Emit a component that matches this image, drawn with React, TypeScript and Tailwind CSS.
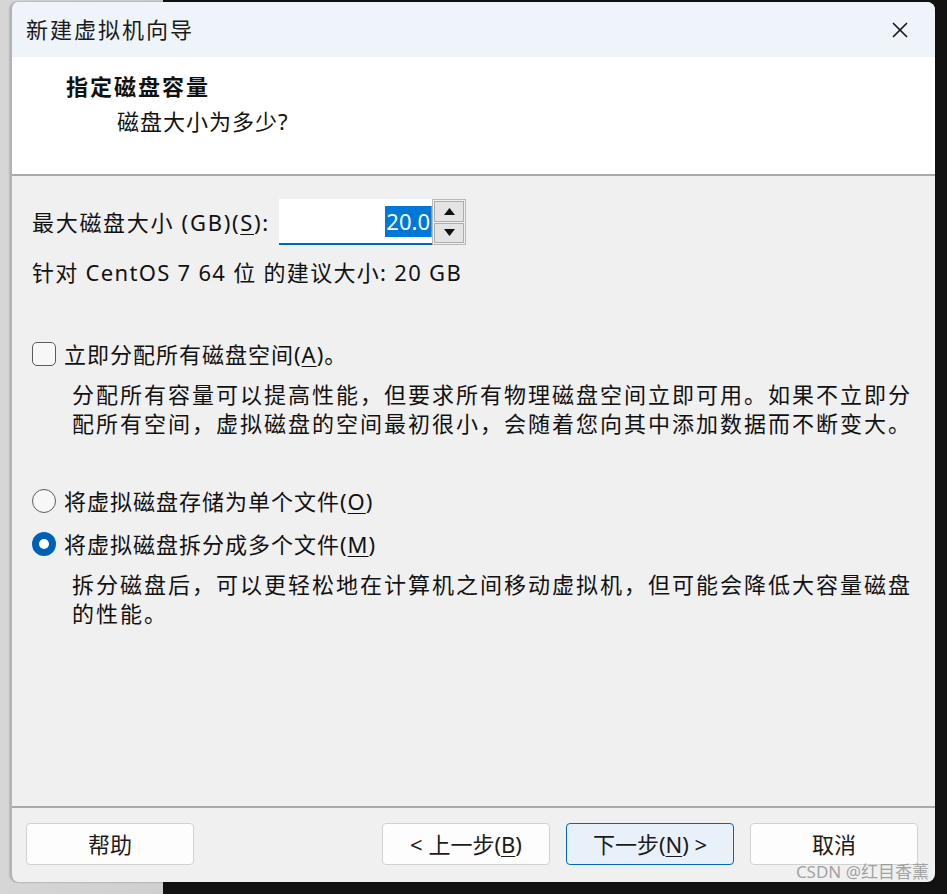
import { X } from "lucide-react";

const font = "font-['Segoe_UI','Noto_Sans','Noto_Sans_CJK_SC',sans-serif]";

function U({ c }: { c: string }) {
  return <span className="underline underline-offset-[3px] decoration-1">{c}</span>;
}

function Button({
  children,
  primary,
}: {
  children: React.ReactNode;
  primary?: boolean;
}) {
  return (
    <div
      className={`flex h-[42px] w-[168px] items-center justify-center rounded-[4px] border text-[22px] text-[#1b1b1b] ${
        primary ? "border-[#0067c0] bg-[#e8f1fa]" : "border-[#d2d2d2] bg-[#fdfdfd]"
      }`}
    >
      {children}
    </div>
  );
}

export default function App() {
  return (
    <div
      className={`h-[894px] w-[947px] overflow-hidden bg-[linear-gradient(to_right,#d6d6d6_0,#cfcfcf_163px,#121212_163px)] pl-[10px] pt-[2px] ${font}`}
    >
      <div className="flex h-[880px] w-[925px] flex-col overflow-hidden rounded-[8px] border-l-2 border-[#b3b3b3] bg-[#f0f0f0] shadow-[0_0_2px_rgba(0,0,0,0.4)]">
        {/* Title bar */}
        <div className="flex h-[55px] shrink-0 items-center justify-between bg-[#eef4f9] pl-[14px] pr-[22px]">
          <span className="text-[22px] tracking-[2px] text-[#1a1a1a]">新建虚拟机向导</span>
          <X className="h-[26px] w-[26px] text-[#1a1a1a]" strokeWidth={1.6} />
        </div>

        {/* Header */}
        <div className="h-[119px] shrink-0 border-b-2 border-[#a9a9a9] bg-white pl-[54px] pt-[14px]">
          <div className="text-[22px] font-bold leading-[30px] tracking-[2px] text-[#111]">指定磁盘容量</div>
          <div className="mt-[5px] pl-[51px] text-[22px] leading-[30px] tracking-[1px] text-[#111]">
            磁盘大小为多少?
          </div>
        </div>

        {/* Body */}
        <div className="flex flex-1 flex-col pl-[20px] pt-[23px] text-[22px] text-[#111]">
          <div className="flex h-[46px] items-center">
            <span className="w-[247px] tracking-[1.7px]">
              最大磁盘大小 (GB)(<U c="S" />):
            </span>
            <div className="flex h-[46px] w-[153px] items-center justify-end border-b-2 border-[#0067c0] bg-white">
              <span className="bg-[#0078d7] px-[1px] leading-[31px] text-white">20.0</span>
              <span className="h-[31px] w-[1px] bg-[#e07a2b]" />
            </div>
            <div className="flex h-[46px] w-[34px] flex-col gap-[1px] border border-[#b8b8b8] bg-[#f0f0f0] p-[1px]">
              <div className="flex flex-1 items-center justify-center border border-[#adadad] bg-[#e4e4e4]">
                <svg width="11" height="7" viewBox="0 0 11 7">
                  <path d="M5.5 0 L11 7 L0 7 Z" fill="#111" />
                </svg>
              </div>
              <div className="flex flex-1 items-center justify-center border border-[#adadad] bg-[#e4e4e4]">
                <svg width="11" height="7" viewBox="0 0 11 7">
                  <path d="M0 0 L11 0 L5.5 7 Z" fill="#111" />
                </svg>
              </div>
            </div>
          </div>

          <div className="mt-[12px] leading-[30px] tracking-[1.3px]">针对 CentOS 7 64 位 的建议大小: 20 GB</div>

          <div className="mt-[52px] flex items-center gap-[8px] leading-[30px]">
            <span className="h-[24px] w-[24px] rounded-[5px] border-[1.5px] border-[#5c5c5c] bg-[#f7f7f7]" />
            <span className="tracking-[1px]">
              立即分配所有磁盘空间(<U c="A" />)。
            </span>
          </div>
          <div className="mt-[11px] pl-[40px] leading-[29px] tracking-[2px]">
            <div>分配所有容量可以提高性能，但要求所有物理磁盘空间立即可用。如果不立即分</div>
            <div>配所有空间，虚拟磁盘的空间最初很小，会随着您向其中添加数据而不断变大。</div>
          </div>

          <div className="mt-[48px] flex items-center gap-[8px] leading-[30px]">
            <span className="h-[24px] w-[24px] rounded-full border-[1.5px] border-[#5c5c5c] bg-[#f7f7f7]" />
            <span className="tracking-[1px]">
              将虚拟磁盘存储为单个文件(<U c="O" />)
            </span>
          </div>
          <div className="mt-[13px] flex items-center gap-[8px] leading-[30px]">
            <span className="flex h-[24px] w-[24px] items-center justify-center rounded-full bg-[#005fb8]">
              <span className="h-[10px] w-[10px] rounded-full bg-white" />
            </span>
            <span className="tracking-[1px]">
              将虚拟磁盘拆分成多个文件(<U c="M" />)
            </span>
          </div>
          <div className="mt-[11px] pl-[40px] leading-[29px] tracking-[2px]">
            <div>拆分磁盘后，可以更轻松地在计算机之间移动虚拟机，但可能会降低大容量磁盘</div>
            <div>的性能。</div>
          </div>
        </div>

        {/* Footer */}
        <div className="relative h-[76px] shrink-0 border-t-2 border-[#a9a9a9] pl-[14px] pr-[17px] pt-[15px]">
          <div className="flex items-start">
            <Button>帮助</Button>
            <div className="ml-auto flex gap-[16px]">
              <Button>
                &lt; 上一步(<U c="B" />)
              </Button>
              <Button primary>
                下一步(<U c="N" />) &gt;
              </Button>
              <Button>取消</Button>
            </div>
          </div>
          <span className="absolute bottom-[-2px] right-[6px] text-[17px] text-[#8d8d8d]/80">CSDN @红目香薰</span>
        </div>
      </div>
    </div>
  );
}
